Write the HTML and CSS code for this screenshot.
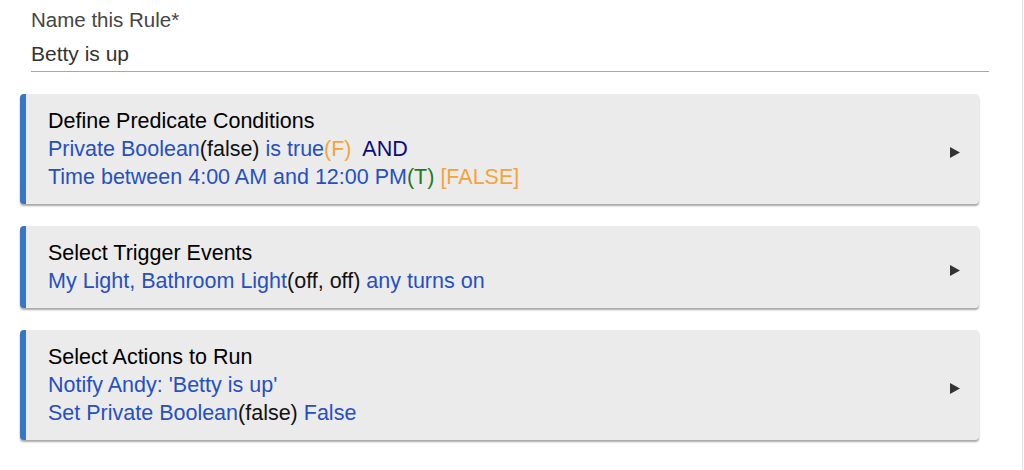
FILE: index.html
```html
<!DOCTYPE html>
<html lang="en">
<head>
    <meta charset="UTF-8">
    <meta name="viewport" content="width=device-width, initial-scale=1.0">
    <title>Rule</title>
    <link rel="stylesheet" href="styles.css">
</head>
<body>
    <div class="page">
        <div class="field">
            <div class="field-label">Name this Rule*</div>
            <div class="field-value">Betty is up</div>
        </div>

        <div class="cards">
            <div class="card">
                <div class="card-text">
                    <div class="card-title">Define Predicate Conditions</div>
                    <div><span class="blue">Private Boolean</span>(false) <span class="blue">is true</span><span class="orange">(F)</span>&nbsp; <span class="navy">AND</span></div>
                    <div><span class="blue">Time between 4:00 AM and 12:00 PM</span><span class="green">(T)</span> <span class="orange">[FALSE]</span></div>
                </div>
                <svg class="arrow" width="10" height="11" viewBox="0 0 10 11"><polygon points="0,0 10,5.5 0,11" fill="#333"/></svg>
            </div>

            <div class="card">
                <div class="card-text">
                    <div class="card-title">Select Trigger Events</div>
                    <div><span class="blue">My Light, Bathroom Light</span>(off, off) <span class="blue">any turns on</span></div>
                </div>
                <svg class="arrow" width="10" height="11" viewBox="0 0 10 11"><polygon points="0,0 10,5.5 0,11" fill="#333"/></svg>
            </div>

            <div class="card">
                <div class="card-text">
                    <div class="card-title">Select Actions to Run</div>
                    <div><span class="blue">Notify Andy: 'Betty is up'</span></div>
                    <div><span class="blue">Set Private Boolean</span>(false) <span class="blue">False</span></div>
                </div>
                <svg class="arrow" width="10" height="11" viewBox="0 0 10 11"><polygon points="0,0 10,5.5 0,11" fill="#333"/></svg>
            </div>
        </div>
    </div>
</body>
</html>
```

FILE: styles.css
```css
body {
    margin: 0;
    font-family: "Liberation Sans", Arial, Helvetica, sans-serif;
    background-color: white;
    color: #111;
}
.page {
    width: 1023px;
    height: 470px;
    box-sizing: border-box;
    border-right: 1px solid #e4e4e4;
    padding: 0 43px 0 20px;
}
.field {
    margin: 0 -10px 0 11px;
    padding-top: 8px;
}
.field-label {
    font-size: 20.5px;
    line-height: 24px;
    color: #454545;
}
.field-value {
    font-size: 21px;
    line-height: 24px;
    color: #333;
    margin-top: 10px;
    padding-bottom: 5px;
    border-bottom: 1px solid #a8a8a8;
}
.cards {
    margin-top: 22px;
    display: flex;
    flex-direction: column;
    gap: 22px;
}
.card {
    display: flex;
    align-items: center;
    background-color: #ebebeb;
    border-left: 6px solid #3676c8;
    border-radius: 4px;
    box-shadow: 0 2px 2px rgba(0, 0, 0, 0.35);
    padding: 13px 19px 13px 22px;
}
.card-text {
    flex: 1;
    font-size: 21.5px;
    line-height: 28px;
    color: #111;
}
.card-title {
    color: #000;
}
.blue {
    color: #2650c2;
}
.navy {
    color: #0b0b80;
}
.orange {
    color: #f4a43a;
}
.green {
    color: #1e7a1e;
}
.arrow {
    margin-top: 6px;
}
```
